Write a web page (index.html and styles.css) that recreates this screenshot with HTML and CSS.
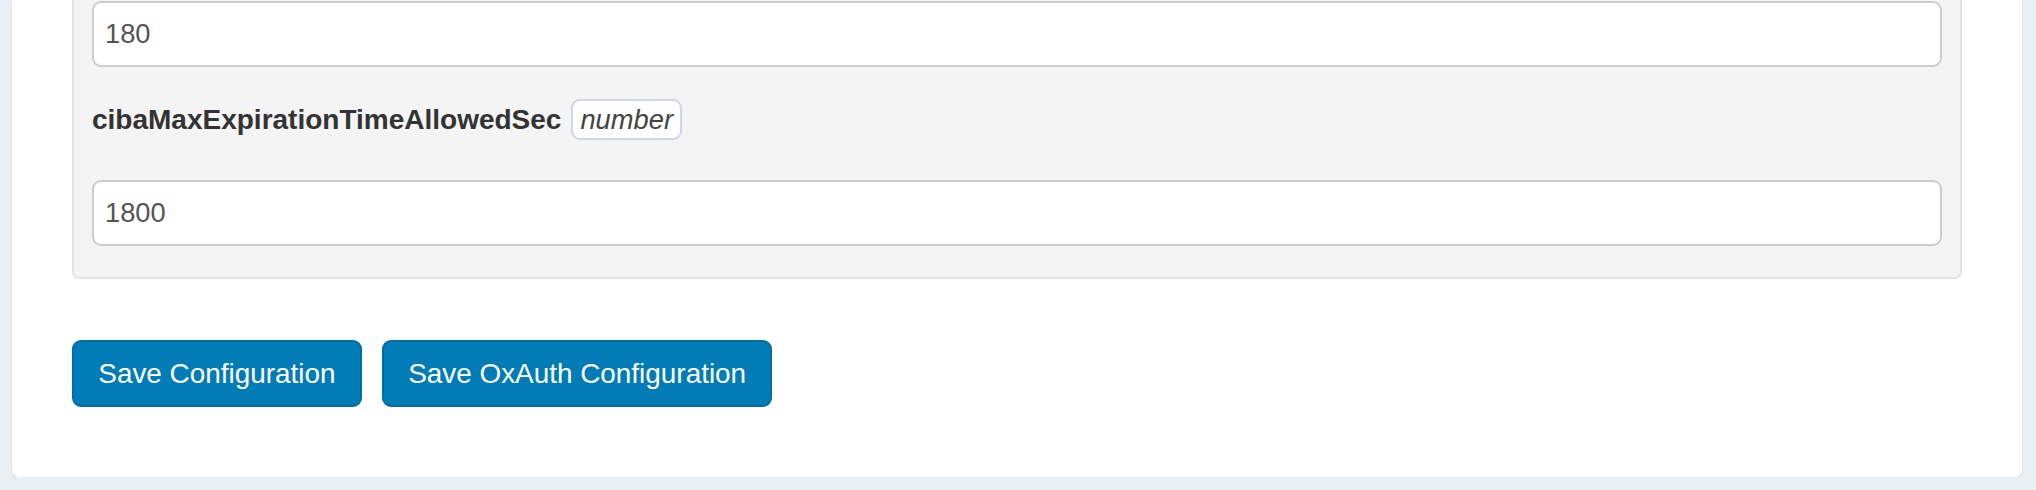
FILE: index.html
```html
<!DOCTYPE html>
<html lang="en">
<head>
<meta charset="utf-8">
<title>OxAuth Configuration</title>
<link rel="stylesheet" href="styles.css">
</head>
<body>
<div class="page">
  <div class="card">
    <div class="fieldset">
      <input class="form-control" type="text" value="180">
      <div class="field-label">
        <label class="label-text">cibaMaxExpirationTimeAllowedSec</label>
        <span class="type-badge">number</span>
      </div>
      <input class="form-control" type="text" value="1800">
    </div>
    <div class="actions">
      <button class="btn" type="button">Save Configuration</button>
      <button class="btn" type="button">Save OxAuth Configuration</button>
    </div>
  </div>
</div>
</body>
</html>
```

FILE: styles.css
```css
html, body {
  margin: 0;
  padding: 0;
  background: #eaeef5;
  font-family: "Liberation Sans", Arial, sans-serif;
  font-size: 27.3px;
  color: #333;
}

.page {
  padding: 0 14px 0 12px;
}

.card {
  background: #fff;
  border-radius: 0 0 7px 7px;
  box-shadow: 0 1px 2px rgba(0, 0, 0, 0.14);
  padding: 0 60px 70px 60px;
}

.fieldset {
  background: #f4f4f4;
  border: 2px solid #e3e3e3;
  border-top: none;
  border-radius: 0 0 7px 7px;
  padding: 1px 18px 31px 18px;
}

.form-control {
  display: block;
  box-sizing: border-box;
  width: 100%;
  height: 66px;
  margin: 0;
  padding: 0 11px;
  border: 2px solid #cccccc;
  border-radius: 9px;
  background: #fff;
  font-family: "Liberation Sans", Arial, sans-serif;
  font-size: 27.3px;
  color: #555;
  outline: none;
}

.field-label {
  display: flex;
  align-items: baseline;
  gap: 10px;
  margin: 32px 0 40px 0;
}

.label-text {
  font-weight: bold;
  font-size: 28px;
  line-height: 31px;
  color: #333;
}

.type-badge {
  font-style: italic;
  font-size: 27.3px;
  line-height: 31px;
  padding: 3px 7px;
  border: 2px solid #cfd7e2;
  border-radius: 9px;
  background: #fff;
  color: #444;
}

.actions {
  display: flex;
  gap: 20px;
  margin-top: 61px;
}

.btn {
  box-sizing: border-box;
  height: 67px;
  margin: 0;
  padding: 0 24.3px;
  border: 2px solid #016ea3;
  border-radius: 9px;
  background: #027cb6;
  color: #fff;
  font-family: "Liberation Sans", Arial, sans-serif;
  font-size: 27.9px;
  line-height: 63px;
  cursor: pointer;
}
```
